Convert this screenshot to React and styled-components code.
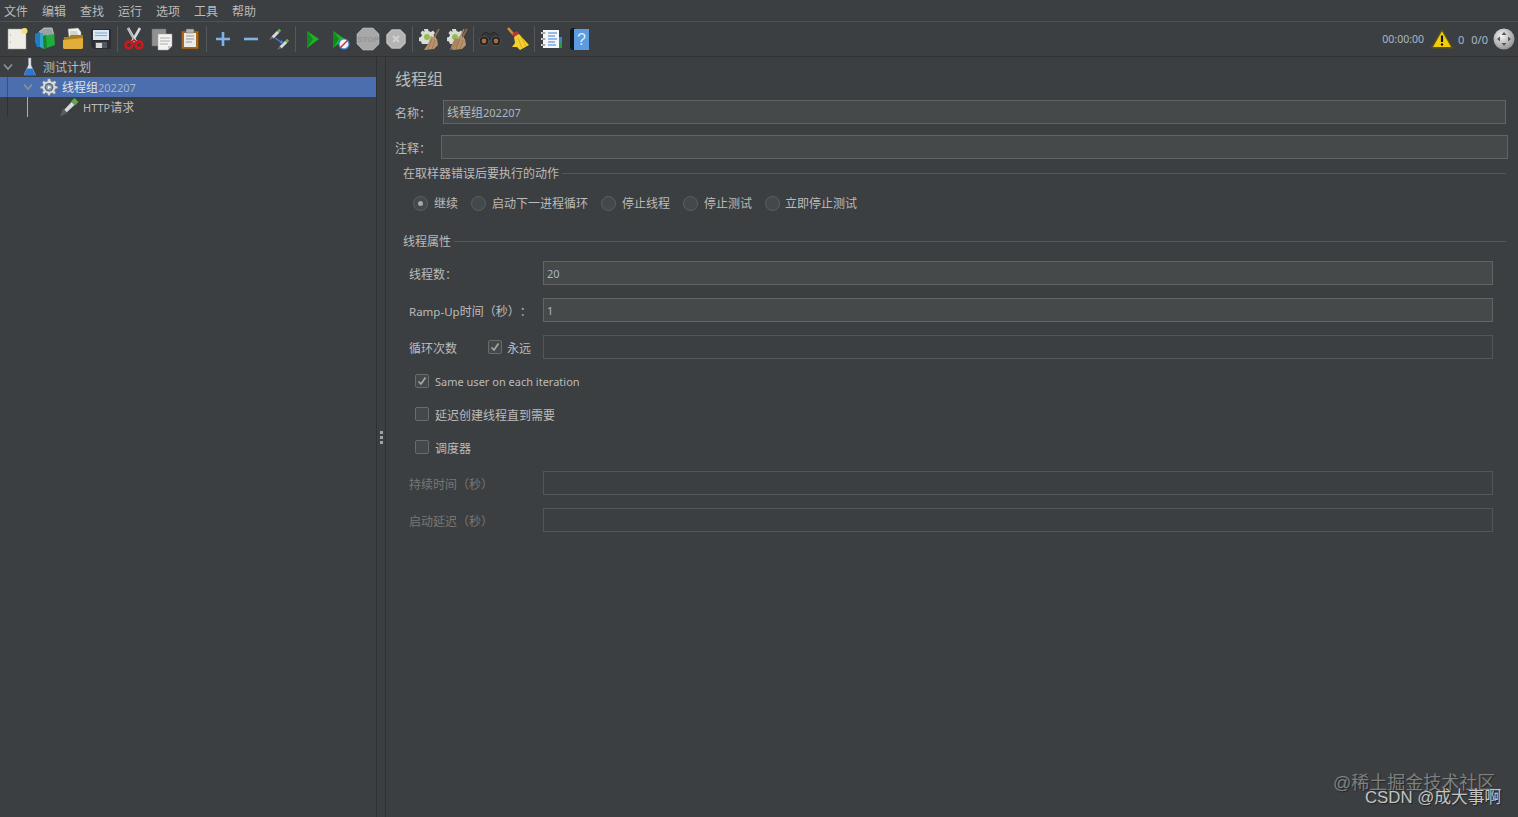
import React from 'react'
import styled, { createGlobalStyle } from 'styled-components'

const GlobalStyle = createGlobalStyle`
  html, body { margin: 0; padding: 0; height: 100%; overflow: hidden; background: #3c3f41; }
  body {
    font-family: "Noto Sans", "Noto Sans CJK SC", sans-serif;
    font-size: 12px;
    color: #bbbbbb;
    text-spacing-trim: space-all;
  }
`

const Page = styled.div`
  position: relative;
  width: 1518px;
  height: 817px;
  display: flex;
  flex-direction: column;
  background: #3c3f41;
  overflow: hidden;
`

const MenuBar = styled.div`
  height: 21px;
  flex: none;
  display: flex;
  align-items: center;
  gap: 14px;
  padding-left: 4px;
  border-bottom: 1px solid #515151;
`
const MenuItem = styled.span`
  font-size: 12px;
  line-height: 20px;
  padding-top: 2px;
`

const ToolBar = styled.div`
  height: 34px;
  flex: none;
  display: flex;
  align-items: center;
  padding: 0 3px 0 3px;
  border-bottom: 1px solid #323232;
`
const ToolButton = styled.div`
  width: 28px;
  height: 28px;
  display: flex;
  align-items: center;
  justify-content: center;
  svg { display: block; }
`
const ToolSep = styled.div`
  width: 1px;
  height: 26px;
  margin: 0 2px;
  background: #555759;
`
const Status = styled.div`
  margin-left: auto;
  display: flex;
  align-items: center;
  color: #a9b7c6;
  font-size: 11px;
`
const Timer = styled.span`
  font-size: 10.5px;
`
const StatusText = styled.span`
  display: block;
  margin-left: ${p => p.$ml}px;
  svg { display: block; }
`

const Body = styled.div`
  flex: 1;
  display: flex;
  min-height: 0;
`
const Tree = styled.div`
  width: 376px;
  flex: none;
  border-right: 1px solid #2f3133;
`
const TreeRow = styled.div`
  height: 20px;
  display: flex;
  align-items: center;
  background: ${p => (p.$selected ? '#4b6eaf' : 'transparent')};
`
const Guide = styled.div`
  width: ${p => p.$w}px;
  height: 100%;
  flex: none;
  box-sizing: border-box;
  border-right: 1px solid ${p => p.$color};
`
const Chevron = styled.svg`
  width: 10px;
  height: 8px;
  flex: none;
  margin-left: ${p => p.$ml}px;
`
const TreeIcon = styled.div`
  width: 20px;
  height: 20px;
  flex: none;
  margin-left: ${p => p.$ml}px;
  display: flex;
  align-items: center;
  justify-content: center;
`
const TreeLabel = styled.span`
  margin-left: ${p => p.$ml || 3}px;
  padding-top: 2px;
  color: ${p => (p.$selected ? '#dfe3ea' : '#bbbbbb')};
  line-height: 20px;
`

const Splitter = styled.div`
  width: 8px;
  flex: none;
  display: flex;
  flex-direction: column;
  align-items: center;
  justify-content: center;
  gap: 2px;
  border-right: 1px solid #2f3133;
`
const GripDot = styled.i`
  width: 3px;
  height: 3px;
  background: #a0a2a4;
`

const Form = styled.div`
  flex: 1;
  min-width: 0;
  padding: 10px 12px 0 9px;
`
const Title = styled.div`
  font-size: 16px;
  line-height: 24px;
  height: 22px;
`
const Row = styled.div`
  display: flex;
  align-items: center;
  height: 24px;
  margin-top: ${p => p.$mt}px;
  margin-right: ${p => p.$mr || 0}px;
`
const Label = styled.span`
  width: ${p => p.$w}px;
  flex: none;
  padding-top: 2px;
  color: ${p => (p.$off ? '#777777' : '#bbbbbb')};
  white-space: nowrap;
`
const Field = styled.div`
  flex: 1;
  height: 24px;
  box-sizing: border-box;
  padding-left: 3px;
  line-height: 23px;
  background: ${p => (p.$off ? 'transparent' : '#45494a')};
  border: 1px solid ${p => (p.$off ? '#555555' : '#646464')};
`
const Num = styled.span`
  font-size: 11px;
  color: #a9b7c6;
`
const Latin = styled.span`
  font-size: ${p => p.$size || 11}px;
`
const Legend = styled.div`
  display: flex;
  align-items: center;
  height: 16px;
  margin-top: ${p => p.$mt}px;
  margin-left: 3px;
  span { padding: 0 3px 0 5px; white-space: nowrap; }
  &::after { content: ''; flex: 1; height: 1px; background: #555759; }
`
const RadioGroup = styled.div`
  display: flex;
  align-items: center;
  height: 16px;
  margin-top: 14px;
  padding-left: 18px;
`
const RadioItem = styled.div`
  display: flex;
  align-items: center;
  width: ${p => p.$w}px;
  flex: none;
  white-space: nowrap;
`
const RadioDot = styled.div`
  width: 15px;
  height: 15px;
  box-sizing: border-box;
  border-radius: 50%;
  border: 1px solid #5d5f60;
  background: #43494a;
  margin-right: ${p => p.$mr}px;
  flex: none;
  display: flex;
  align-items: center;
  justify-content: center;
  &::after {
    content: '';
    width: 5px;
    height: 5px;
    border-radius: 50%;
    background: ${p => (p.$on ? '#a7a7a7' : 'transparent')};
  }
`
const Box = styled.div`
  width: 14px;
  height: 14px;
  box-sizing: border-box;
  flex: none;
  border: 1px solid #6b6b6b;
  border-radius: 2px;
  background: #43494a;
  display: flex;
  align-items: center;
  justify-content: center;
  margin-right: ${p => p.$mr}px;
`
const CheckRow = styled.div`
  display: flex;
  align-items: center;
  height: 14px;
  margin-top: ${p => p.$mt}px;
  padding-left: 6px;
`
const CheckText = styled.span`
  padding-top: 2px;
`
const PropsArea = styled.div`
  padding-left: 14px;
  margin-right: 13px;
`
const LoopCheck = styled.div`
  width: 134px;
  flex: none;
  display: flex;
  align-items: center;
`
const Watermark = styled.div`
  position: absolute;
  left: ${p => p.$x}px;
  top: ${p => p.$y}px;
  font-size: ${p => p.$size}px;
  line-height: 1;
  color: ${p => p.$color};
  font-family: "Liberation Sans", "Noto Sans CJK SC", sans-serif;
  white-space: nowrap;
  text-shadow: 1px 1px 1px rgba(0, 0, 0, 0.45);
`

const Check = () => (
  <svg width="10" height="10" viewBox="0 0 10 10">
    <path d="M1.5 5.5 L4 8 L8.5 1.5" fill="none" stroke="#a7a7a7" strokeWidth="1.7" />
  </svg>
)

const NewIcon = () => (
  <svg width="24" height="24" viewBox="0 0 24 24">
    <rect x="3" y="2" width="18" height="20" fill="#eeeee6" stroke="#9c9c90" strokeWidth=".5" />
    <circle cx="5.5" cy="8" r=".6" fill="#999" /><circle cx="5.5" cy="15" r=".6" fill="#999" />
    <circle cx="19.5" cy="4" r="3" fill="#f6e27a" />
  </svg>
)
const TemplatesIcon = () => (
  <svg width="24" height="24" viewBox="0 0 24 24">
    <path d="M6 5 L11 1 L19 1 L21 9 L7 11Z" fill="#9aa3a3" stroke="#cfd3d3" strokeWidth=".8" />
    <path d="M2 7 L7 5 L8 20 L4 20 L2 15Z" fill="#1d7cc4" />
    <path d="M7 6 L10 6 L11 22 L7 20Z" fill="#38a3c8" />
    <path d="M10 9 L21 7 L22 18 L11 22Z" fill="#1fae3c" />
    <path d="M10 9 L13 8 L14 21 L11 22Z" fill="#128a2a" />
  </svg>
)
const OpenIcon = () => (
  <svg width="24" height="24" viewBox="0 0 24 24">
    <path d="M8 10 L7 2 L17 1 L20 5 L20 12Z" fill="#f1f1ee" stroke="#9a9a9a" strokeWidth=".5" />
    <path d="M9 5h7M9 7h8M9 9h8" stroke="#9a9a9a" strokeWidth=".7" />
    <path d="M3 10 L8 10 L10 8 L22 8 L22 20 Q22 22 20 22 L4 22 Q2 22 2 20Z" fill="#a97c1c" />
    <path d="M2 13 L22 11 L22 20 Q22 22 20 22 L4 22 Q2 22 2 20Z" fill="#e2ad38" />
  </svg>
)
const SaveIcon = () => (
  <svg width="24" height="24" viewBox="0 0 24 24">
    <path d="M2 2 L22 2 L22 22 L5 22 L2 19Z" fill="#2b2e32" />
    <rect x="4" y="3" width="16" height="10" fill="#dbe7f2" />
    <path d="M6 6h12M6 8.5h12" stroke="#7fa9d4" strokeWidth="1" />
    <rect x="6" y="15" width="12" height="6" fill="#55585c" />
    <rect x="7" y="16" width="6" height="5" fill="#d8d8d8" />
  </svg>
)
const CutIcon = () => (
  <svg width="24" height="24" viewBox="0 0 24 24">
    <path d="M6 1 L14 15 M18 1 L10 15" stroke="#d6d8da" strokeWidth="2.6" />
    <path d="M6 1 L13 14" stroke="#8b8d90" strokeWidth=".7" />
    <circle cx="7" cy="18" r="3.4" fill="none" stroke="#d3161a" strokeWidth="2.6" />
    <circle cx="17" cy="18" r="3.4" fill="none" stroke="#d3161a" strokeWidth="2.6" />
    <path d="M9.5 15 L12 13 L14.5 15" stroke="#b21216" strokeWidth="1.6" fill="none" />
  </svg>
)
const CopyIcon = () => (
  <svg width="24" height="24" viewBox="0 0 24 24">
    <rect x="2" y="2" width="14" height="17" fill="#8f9192" stroke="#6f7173" strokeWidth=".5" />
    <path d="M8 7 L22 7 L22 19 L18 23 L8 23Z" fill="#f2f2f0" stroke="#a2a2a2" strokeWidth=".5" />
    <path d="M10 11h10M10 14h10M10 17h8" stroke="#9c9c9c" strokeWidth=".8" />
    <path d="M18 23 L18 19 L22 19Z" fill="#c4c4c2" />
  </svg>
)
const PasteIcon = () => (
  <svg width="24" height="24" viewBox="0 0 24 24">
    <rect x="3.5" y="4" width="17" height="18" rx="1" fill="#a5681c" stroke="#6f4710" strokeWidth=".6" />
    <rect x="6" y="6" width="12" height="14" fill="#ecebe6" />
    <rect x="8" y="2" width="8" height="4" rx="1" fill="#b5b5b5" stroke="#666" strokeWidth=".5" />
    <path d="M8 9h8M8 12h8M8 15h6" stroke="#8f8f8f" strokeWidth=".9" />
  </svg>
)
const AddIcon = () => (
  <svg width="24" height="24" viewBox="0 0 24 24">
    <path d="M12 5 V19 M5 12 H19" stroke="#7fb2e5" strokeWidth="2.6" />
  </svg>
)
const RemoveIcon = () => (
  <svg width="24" height="24" viewBox="0 0 24 24">
    <path d="M5 12 H19" stroke="#7fb2e5" strokeWidth="2.6" />
  </svg>
)
const ToggleIcon = () => (
  <svg width="24" height="24" viewBox="0 0 24 24">
    <path d="M11 3 L13 5" stroke="#6fae4e" strokeWidth="3.4" />
    <path d="M11 5 L5.5 10.5" stroke="#d8dadc" strokeWidth="3" />
    <path d="M6.5 11 L4.5 9 L2 13Z" fill="#6a6d70" />
    <path d="M19 13 L21 15" stroke="#6fae4e" strokeWidth="3.4" />
    <path d="M19 15 L13.5 20.5" stroke="#d8dadc" strokeWidth="3" />
    <path d="M14.5 21 L12.5 19 L10 23Z" fill="#6a6d70" />
    <path d="M8 11 L14 15" stroke="#3d86dc" strokeWidth="1.4" />
    <path d="M16.5 16.5 L12.4 16.2 L14.6 12.8Z" fill="#3d86dc" />
  </svg>
)
const StartIcon = () => (
  <svg width="24" height="24" viewBox="0 0 24 24">
    <path d="M7 4 L19 12 L7 21Z" fill="#1fb02a" />
    <path d="M7 4 L13 12 L7 21Z" fill="#0f8a1c" />
  </svg>
)
const StartNoPauseIcon = () => (
  <svg width="24" height="24" viewBox="0 0 24 24">
    <path d="M5 4 L17 12 L5 21Z" fill="#1fb02a" />
    <path d="M5 4 L11 12 L5 21Z" fill="#0f8a1c" />
    <circle cx="16" cy="17" r="5" fill="#eef4fb" stroke="#3d86dc" strokeWidth="1.2" />
    <path d="M12.5 20.5 L19.5 13.5" stroke="#d32a2a" strokeWidth="1.4" />
  </svg>
)
const StopIcon = () => (
  <svg width="24" height="24" viewBox="0 0 24 24">
    <path d="M7 1 H17 L23 7 V17 L17 23 H7 L1 17 V7Z" fill="#a8a8a8" stroke="#bdbdbd" strokeWidth=".6" />
    <text x="12" y="15" textAnchor="middle" fontSize="8" fontWeight="700" fill="#949494" fontFamily="Liberation Sans, sans-serif">STOP</text>
  </svg>
)
const ShutdownIcon = () => (
  <svg width="24" height="24" viewBox="0 0 24 24">
    <path d="M8 3 H16 L21 8 V16 L16 21 H8 L3 16 V8Z" fill="#b4b4b4" stroke="#bebebe" strokeWidth="1.5" strokeLinejoin="round" />
    <path d="M9 9 L15 15 M15 9 L9 15" stroke="#d0d0d0" strokeWidth="2.2" />
  </svg>
)
const Broom = ({ double }) => (
  <svg width="24" height="24" viewBox="0 0 24 24">
    <path d="M7 2 H11 L11.5 4 L14 5 L16 3.5 L18 6 L16.5 8 L17.5 10 L19 10.5 V14 L17 14.5 L16 17 L5 17 L4 14.5 L2 14 V10.5 L4 10 L5 8 L3.5 6 L5.5 3.5 L7.5 5Z" fill="#dcdcd6" />
    <circle cx="10" cy="10" r="3" fill="#8fc04a" />
    {double && <path d="M15 11 L19 2" stroke="#a08262" strokeWidth="1.6" />}
    <path d="M22 2 L17 11" stroke="#8a6a48" strokeWidth="1.8" />
    <path d="M14 9 L20 12 L21 18 L17 22 L7 23 L11 17Z" fill="#b8946c" />
    {double && <path d="M10 11 L15 12 L12 19 L5 23 L7 17Z" fill="#a98660" />}
    <path d="M15 12 L11 22 M18 13 L15 22" stroke="#8a6c4a" strokeWidth=".7" />
  </svg>
)
const BinocularsIcon = () => (
  <svg width="24" height="24" viewBox="0 0 24 24">
    <path d="M4 8 L8 5 L11 7 L13 7 L16 5 L20 8 L23 15 L15 16 L13 12 H11 L9 16 L1 15Z" fill="#34373a" stroke="#171819" strokeWidth=".6" />
    <circle cx="6" cy="14" r="4.8" fill="#1f2122" stroke="#5c5f62" strokeWidth=".8" />
    <circle cx="18" cy="14" r="4.8" fill="#1f2122" stroke="#5c5f62" strokeWidth=".8" />
    <circle cx="6" cy="14" r="2.4" fill="#a86b3c" />
    <circle cx="18" cy="14" r="2.4" fill="#a86b3c" />
  </svg>
)
const SweepIcon = () => (
  <svg width="24" height="24" viewBox="0 0 24 24">
    <path d="M2 1 L8 8" stroke="#c98f3a" strokeWidth="2.6" />
    <path d="M6 7 L11 4 L13 7 L9 10Z" fill="#c8303a" />
    <path d="M8 10 L13 7 L23 18 L14 23 L11 20 L6 20 L9 16Z" fill="#f5cf2e" />
    <path d="M12 11 L16 21 M15 10 L20 19" stroke="#cfa314" strokeWidth=".8" />
  </svg>
)
const ListIcon = () => (
  <svg width="24" height="24" viewBox="0 0 24 24">
    <rect x="4" y="3" width="16" height="18" fill="#f4f6f8" />
    <path d="M2 6 H7 M2 12 H7 M2 18 H7" stroke="#dcdcdc" strokeWidth="2.2" />
    <path d="M3 6 H6 M3 12 H6 M3 18 H6" stroke="#333" strokeWidth=".6" />
    <path d="M9 6 H18 M9 9 H16 M9 12 H18 M9 15 H16 M9 18 H17" stroke="#3d7fd0" strokeWidth="1.1" />
    <rect x="20" y="10" width="3" height="5" fill="#3d7fd0" />
    <rect x="20" y="15" width="3" height="6" fill="#2d9a3d" />
  </svg>
)
const HelpIcon = () => (
  <svg width="24" height="24" viewBox="0 0 24 24">
    <path d="M3 3 L5 1 H8 V23 H5 L3 21Z" fill="#15181b" />
    <rect x="7" y="2" width="15" height="21" fill="#5b9be0" />
    <text x="14.5" y="18" textAnchor="middle" fontSize="16" fill="#dfecfa" fontFamily="Liberation Sans, sans-serif">?</text>
  </svg>
)
const WarnIcon = () => (
  <svg width="22" height="20" viewBox="0 0 22 20">
    <path d="M11 1 L21.3 18.8 H.7Z" fill="#f3cf06" stroke="#5a5220" strokeWidth="1.4" strokeLinejoin="round" />
    <path d="M11 6.5 V13" stroke="#111" strokeWidth="2.2" />
    <circle cx="11" cy="15.5" r="1.2" fill="#111" />
  </svg>
)
const GlobeIcon = () => (
  <svg width="22" height="22" viewBox="0 0 22 22">
    <defs>
      <radialGradient id="gb" cx="40%" cy="35%" r="70%">
        <stop offset="0" stopColor="#f4f4f4" /><stop offset="1" stopColor="#8f8f8f" />
      </radialGradient>
    </defs>
    <circle cx="11" cy="11" r="10.5" fill="url(#gb)" />
    <path d="M11 4 L13.5 7 H8.5Z M11 18 L13.5 15 H8.5Z M4 11 L7 8.5 V13.5Z M18 11 L15 8.5 V13.5Z" fill="#55585a" />
  </svg>
)
const FlaskIcon = () => (
  <svg width="20" height="20" viewBox="0 0 20 20">
    <path d="M8.5 1 H11 V8 L15.5 18 H4 L8.5 8Z" fill="#dfe4ea" stroke="#9ea6b0" strokeWidth=".5" />
    <path d="M7 11.5 H12.5 L15.5 18 H4Z" fill="#2f76d0" />
  </svg>
)
const GearIcon = () => (
  <svg width="18" height="18" viewBox="0 0 20 20">
    <path d="M8.5 1 H11.5 L12 3.5 L14.2 4.4 L16.4 3 L18 5 L16.4 6.9 L17 9 L19.5 9.5 V11.5 L17 12 L16.2 14.2 L17.5 16.4 L15.6 18 L13.6 16.4 L11.5 17.2 L11 19.5 H9 L8.5 17.2 L6.3 16.4 L4.4 18 L2.5 16.4 L3.8 14.2 L3 12 L.5 11.5 V9.5 L3 9 L3.8 6.9 L2.5 5 L4.4 3 L6.3 4.4 L8.5 3.5Z" fill="#dcdcdc" stroke="#8d8d8d" strokeWidth=".5" />
    <circle cx="10" cy="10.3" r="4.8" fill="#5d6a7c" />
    <circle cx="10" cy="10.3" r="3.2" fill="#8ea8c8" />
    <path d="M8.8 8.3 L12.4 10.3 L8.8 12.3Z" fill="#f2f5f8" />
  </svg>
)
const PipetteIcon = () => (
  <svg width="20" height="20" viewBox="0 0 20 20">
    <path d="M15.5 1 L19.5 5 L16 8.5 L12 4.5Z" fill="#5fa84a" />
    <path d="M12.5 5 L15.5 8 L7.5 15.5 L5 13Z" fill="#d8dadc" />
    <path d="M4 11.5 L8.5 16 L1 19.5Z" fill="#5a5d60" />
  </svg>
)

const ChevronDown = ({ ml }) => (
  <Chevron $ml={ml} viewBox="0 0 10 8">
    <path d="M1 1.5 L5 6 L9 1.5" fill="none" stroke="#8f9193" strokeWidth="1.6" />
  </Chevron>
)

const toolGroups = [
  [NewIcon, TemplatesIcon, OpenIcon, SaveIcon],
  [CutIcon, CopyIcon, PasteIcon],
  [AddIcon, RemoveIcon, ToggleIcon],
  [StartIcon, StartNoPauseIcon, StopIcon, ShutdownIcon],
  [() => <Broom />, () => <Broom double />],
  [BinocularsIcon, SweepIcon],
  [ListIcon, HelpIcon],
]

const menus = ['文件', '编辑', '查找', '运行', '选项', '工具', '帮助']

const radios = [
  { text: '继续', w: 58, gap: 6, on: true },
  { text: '启动下一进程循环', w: 130, gap: 6 },
  { text: '停止线程', w: 82, gap: 6 },
  { text: '停止测试', w: 82, gap: 6 },
  { text: '立即停止测试', w: 100, gap: 5 },
]

export default function App() {
  return (
    <Page>
      <GlobalStyle />
      <MenuBar>
        {menus.map(m => <MenuItem key={m}>{m}</MenuItem>)}
      </MenuBar>
      <ToolBar>
        {toolGroups.map((group, i) => (
          <React.Fragment key={i}>
            {i > 0 && <ToolSep />}
            {group.map((Icon, j) => <ToolButton key={j}><Icon /></ToolButton>)}
          </React.Fragment>
        ))}
        <Status>
          <Timer>00:00:00</Timer>
          <StatusText $ml={7}><WarnIcon /></StatusText>
          <StatusText $ml={5}>0</StatusText>
          <StatusText $ml={7}>0/0</StatusText>
          <StatusText $ml={5}><GlobeIcon /></StatusText>
        </Status>
      </ToolBar>
      <Body>
        <Tree>
          <TreeRow>
            <ChevronDown ml={3} />
            <TreeIcon $ml={7}><FlaskIcon /></TreeIcon>
            <TreeLabel>测试计划</TreeLabel>
          </TreeRow>
          <TreeRow $selected>
            <Guide $w={8} $color="#3c4f75" />
            <ChevronDown ml={15} />
            <TreeIcon $ml={6}><GearIcon /></TreeIcon>
            <TreeLabel $selected $ml={3}>线程组<Num>202207</Num></TreeLabel>
          </TreeRow>
          <TreeRow>
            <Guide $w={8} $color="#2e3032" />
            <Guide $w={20} $color="#8ab4d8" />
            <TreeIcon $ml={31}><PipetteIcon /></TreeIcon>
            <TreeLabel $ml={4}><Latin>HTTP</Latin>请求</TreeLabel>
          </TreeRow>
        </Tree>
        <Splitter>
          <GripDot /><GripDot /><GripDot />
        </Splitter>
        <Form>
          <Title>线程组</Title>
          <Row $mt={11}>
            <Label $w={48}>名称：</Label>
            <Field><span>线程组</span><Num>202207</Num></Field>
          </Row>
          <Row $mt={11} $mr={-2}>
            <Label $w={46}>注释：</Label>
            <Field />
          </Row>
          <Legend $mt={6}><span>在取样器错误后要执行的动作</span></Legend>
          <RadioGroup>
            {radios.map(r => (
              <RadioItem key={r.text} $w={r.w}>
                <RadioDot $on={r.on} $mr={r.gap} />
                {r.text}
              </RadioItem>
            ))}
          </RadioGroup>
          <Legend $mt={22}><span>线程属性</span></Legend>
          <PropsArea>
            <Row $mt={12}>
              <Label $w={134}>线程数：</Label>
              <Field><Num>20</Num></Field>
            </Row>
            <Row $mt={13}>
              <Label $w={134}><Latin $size={11.5}>Ramp-Up</Latin>时间（秒）：</Label>
              <Field><Num>1</Num></Field>
            </Row>
            <Row $mt={13}>
              <LoopCheck>
                <Label $w={79}>循环次数</Label>
                <Box $mr={5}><Check /></Box>
                <CheckText>永远</CheckText>
              </LoopCheck>
              <Field $off />
            </Row>
            <CheckRow $mt={15}>
              <Box $mr={6}><Check /></Box>
              <Latin>Same user on each iteration</Latin>
            </CheckRow>
            <CheckRow $mt={19}>
              <Box $mr={6} />
              <CheckText>延迟创建线程直到需要</CheckText>
            </CheckRow>
            <CheckRow $mt={19}>
              <Box $mr={6} />
              <CheckText>调度器</CheckText>
            </CheckRow>
            <Row $mt={17}>
              <Label $w={134} $off>持续时间（秒）</Label>
              <Field $off />
            </Row>
            <Row $mt={13}>
              <Label $w={134} $off>启动延迟（秒）</Label>
              <Field $off />
            </Row>
          </PropsArea>
        </Form>
      </Body>
      <Watermark $x={1333} $y={774} $size={18} $color="#7e8081">@稀土掘金技术社区</Watermark>
      <Watermark $x={1365} $y={790} $size={16.8} $color="#c4c4c4">CSDN @成大事啊</Watermark>
    </Page>
  )
}
